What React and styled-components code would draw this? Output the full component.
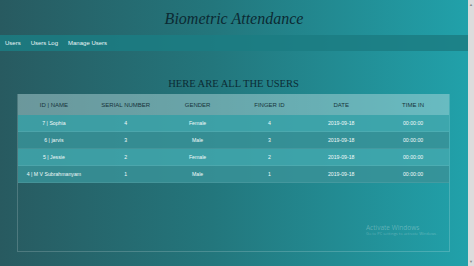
import React from "react"
import styled, { createGlobalStyle } from "styled-components"

const GlobalStyle = createGlobalStyle`
  body {
    margin: 0;
    overflow: hidden;
    font-family: "Liberation Sans", Arial, sans-serif;
  }
`

const Page = styled.div`
  display: flex;
  width: 474px;
  height: 266px;
`

const Main = styled.div`
  flex: 1;
  position: relative;
  background: linear-gradient(to right, #285a60 0%, #23767c 45%, #21a1aa 100%);
  display: flex;
  flex-direction: column;
`

const Scrollbar = styled.div`
  width: 6px;
  background: #dcdcdc;
  display: flex;
  flex-direction: column;
  justify-content: space-between;
  align-items: center;
  font-size: 4px;
  color: #888;
  padding: 2px 0;
  box-sizing: border-box;
`

const Header = styled.header`
  height: 35px;
  display: flex;
  align-items: center;
  justify-content: center;
`

const Title = styled.h1`
  margin: 0;
  font-family: "Liberation Serif", "Times New Roman", serif;
  font-style: italic;
  font-weight: normal;
  font-size: 16px;
  color: #0c2a33;
  padding-top: 3px;
`

const Nav = styled.nav`
  height: 16px;
  background: rgba(27, 124, 131, 0.85);
  display: flex;
  align-items: center;
  gap: 10px;
  padding-left: 5px;
`

const NavLink = styled.a`
  color: #eaf6f7;
  font-size: 6px;
  text-decoration: none;
`

const Content = styled.section`
  padding: 0 18px 0 17px;
  display: flex;
  flex-direction: column;
`

const Heading = styled.h2`
  margin: 27px 0 5px;
  text-align: center;
  font-family: "Liberation Serif", "Times New Roman", serif;
  font-weight: normal;
  font-size: 10.5px;
  color: #0b2b34;
`

const TableBox = styled.div`
  height: 158px;
  border: 1px solid rgba(255, 255, 255, 0.18);
  border-top: none;
  box-sizing: border-box;
`

const Row = styled.div`
  display: grid;
  grid-template-columns: repeat(6, 1fr);
  align-items: center;
  box-sizing: border-box;
  height: ${(p) => (p.$head ? "21px" : "17px")};
  background: ${(p) =>
    p.$head
      ? "rgba(190, 225, 226, 0.45)"
      : p.$odd
      ? "rgba(66, 168, 174, 0.85)"
      : "rgba(56, 146, 152, 0.85)"};
  border-bottom: ${(p) => (p.$head ? "none" : "1px solid rgba(255,255,255,0.08)")};
`

const Cell = styled.div`
  text-align: center;
  font-size: ${(p) => (p.$head ? "6px" : "5.2px")};
  color: ${(p) => (p.$head ? "#17353b" : "#f2fafa")};
  white-space: nowrap;
`

const Watermark = styled.div`
  position: absolute;
  left: 366px;
  top: 224px;
  color: rgba(255, 255, 255, 0.28);
  font-family: "Open Sans", sans-serif;
  line-height: 1.2;
`

const WatermarkTitle = styled.div`
  font-size: 6.5px;
`

const WatermarkSub = styled.div`
  font-size: 4px;
`

const columns = ["ID | NAME", "SERIAL NUMBER", "GENDER", "FINGER ID", "DATE", "TIME IN"]

const users = [
  ["7 | Sophia", "4", "Female", "4", "2019-09-18", "00:00:00"],
  ["6 | jarvis", "3", "Male", "3", "2019-09-18", "00:00:00"],
  ["5 | Jessie", "2", "Female", "2", "2019-09-18", "00:00:00"],
  ["4 | M V Subrahmanyam", "1", "Male", "1", "2019-09-18", "00:00:00"],
]

const App = () => {
  return (
    <Page>
      <GlobalStyle />
      <Main>
        <Header>
          <Title>Biometric Attendance</Title>
        </Header>
        <Nav>
          <NavLink href="#">Users</NavLink>
          <NavLink href="#">Users Log</NavLink>
          <NavLink href="#">Manage Users</NavLink>
        </Nav>
        <Content>
          <Heading>HERE ARE ALL THE USERS</Heading>
          <TableBox>
            <Row $head>
              {columns.map((c) => (
                <Cell $head key={c}>
                  {c}
                </Cell>
              ))}
            </Row>
            {users.map((u, i) => (
              <Row key={u[0]} $odd={i % 2 === 0}>
                {u.map((v, j) => (
                  <Cell key={j}>{v}</Cell>
                ))}
              </Row>
            ))}
          </TableBox>
        </Content>
        <Watermark>
          <WatermarkTitle>Activate Windows</WatermarkTitle>
          <WatermarkSub>Go to PC settings to activate Windows.</WatermarkSub>
        </Watermark>
      </Main>
      <Scrollbar>
        <span>▲</span>
        <span>▼</span>
      </Scrollbar>
    </Page>
  )
}

export default App
